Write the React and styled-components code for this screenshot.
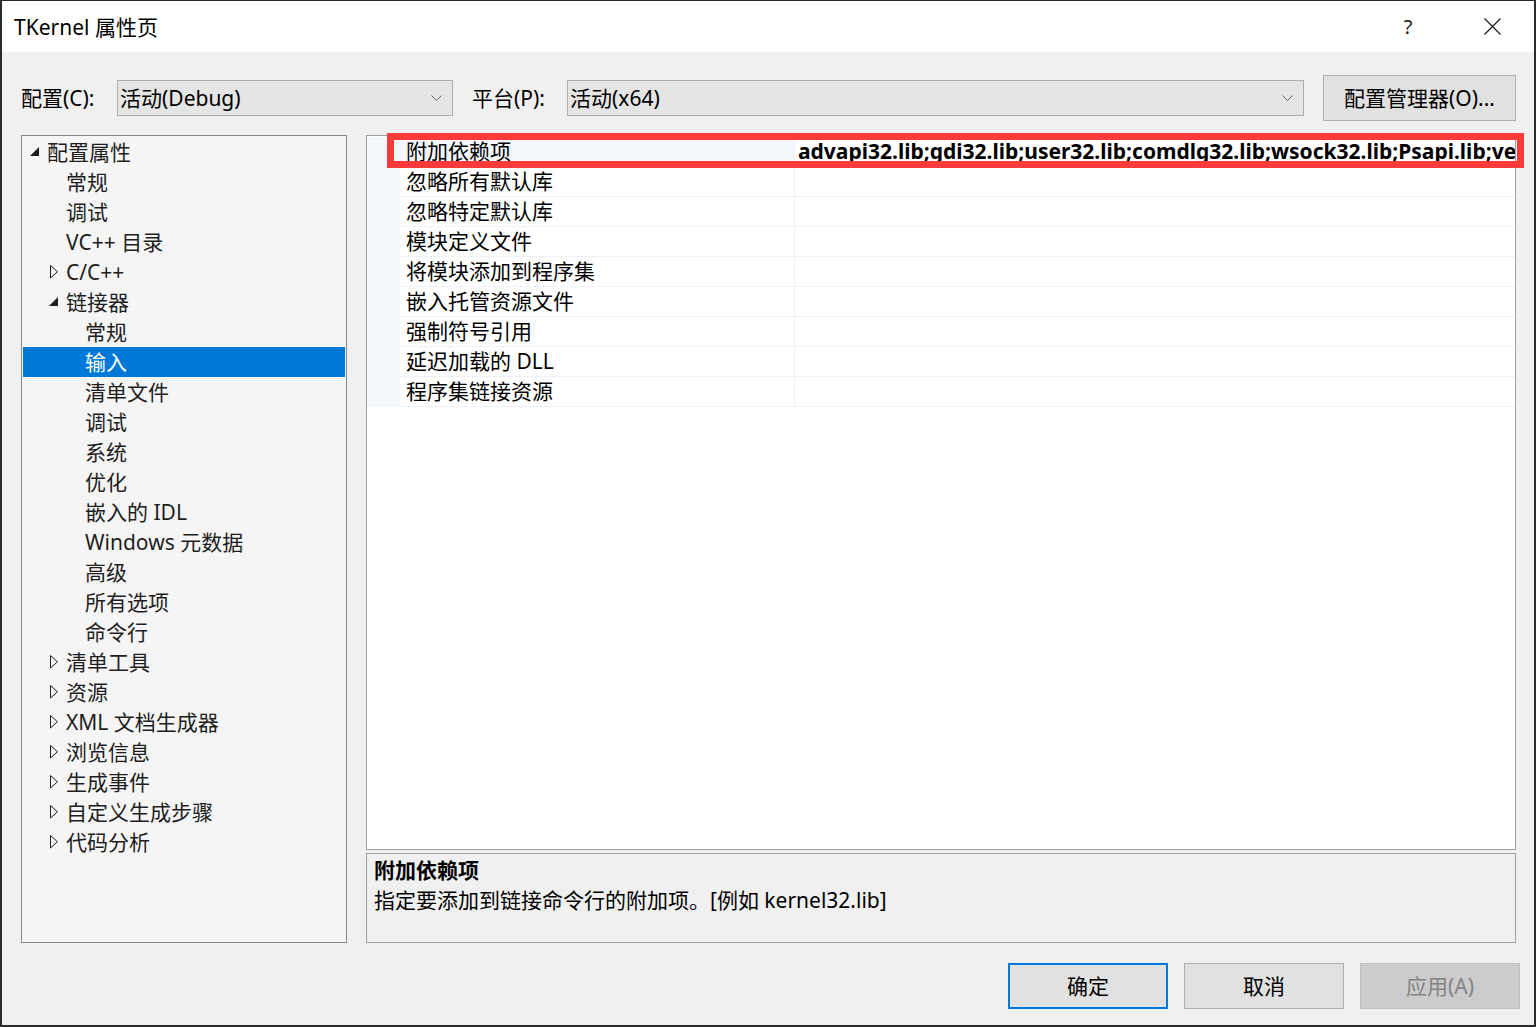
import React from "react";
import styled, { createGlobalStyle } from "styled-components";

const Global = createGlobalStyle`
  html, body { margin: 0; padding: 0; background: #2b2b2b; }
  body { font-family: "Noto Sans", "Noto Sans CJK SC", sans-serif; font-size: 21px; color: #000; }
  * { box-sizing: border-box; }
`;

const Window = styled.div`
  width: 1536px;
  height: 1027px;
  border: 2px solid #2b2b2b;
  border-top-width: 1px;
  background: #f0f0f0;
  display: flex;
  flex-direction: column;
  overflow: hidden;
`;

const TitleBar = styled.div`
  height: 51px;
  flex: none;
  background: #fff;
  display: flex;
  align-items: center;
  padding-left: 12px;
`;

const Title = styled.div`
  flex: 1;
  line-height: 28px;
`;

const TitleButton = styled.div`
  width: 84px;
  height: 51px;
  display: flex;
  align-items: center;
  justify-content: center;
  color: #1a1a1a;
  font-size: 20px;
`;

const Body = styled.div`
  flex: 1;
  display: flex;
  flex-direction: column;
  padding: 0 18px 16px 19px;
`;

const ConfigRow = styled.div`
  margin-top: 23px;
  height: 46px;
  display: flex;
  align-items: center;
`;

const Label = styled.div`
  width: ${(p) => p.$w}px;
  margin-left: ${(p) => p.$ml || 0}px;
  line-height: 30px;
  flex: none;
  white-space: nowrap;
`;

const Select = styled.div`
  height: 36px;
  width: ${(p) => (p.$w ? `${p.$w}px` : "auto")};
  flex: ${(p) => (p.$w ? "none" : "1")};
  background: #e5e5e5;
  border: 1px solid #adadad;
  display: flex;
  align-items: center;
  padding-left: 2px;
  padding-right: 10px;
`;

const SelectText = styled.div`
  flex: 1;
  line-height: 30px;
`;

const Button = styled.div`
  width: ${(p) => p.$w}px;
  height: 46px;
  flex: none;
  margin-left: ${(p) => p.$ml || 0}px;
  display: flex;
  align-items: center;
  justify-content: center;
  background: ${(p) => (p.$disabled ? "#cccccc" : "#e1e1e1")};
  border: ${(p) => (p.$default ? "2px solid #0078d7" : p.$disabled ? "1px solid #bfbfbf" : "1px solid #adadad")};
  color: ${(p) => (p.$disabled ? "#838383" : "#000")};
  line-height: 30px;
  white-space: nowrap;
`;

const Main = styled.div`
  margin-top: 14px;
  height: 808px;
  display: flex;
`;

const TreePanel = styled.div`
  width: 326px;
  flex: none;
  border: 1px solid #828790;
  background: #f5f5f5;
  padding: 1px;
`;

const TreeRow = styled.div`
  height: 30px;
  display: flex;
  align-items: center;
  padding-left: ${(p) => 5 + p.$level * 19}px;
  background: ${(p) => (p.$selected ? "#0078d7" : "transparent")};
  color: ${(p) => (p.$selected ? "#fff" : "#1e1e1e")};
  white-space: nowrap;
`;

const Toggle = styled.div`
  width: 19px;
  height: 30px;
  flex: none;
  display: flex;
  align-items: center;
  padding-left: ${(p) => (p.$open ? 2 : 3)}px;
  padding-bottom: ${(p) => (p.$open ? 1 : 0)}px;
`;

const TreeText = styled.span`
  line-height: 30px;
`;

const RightCol = styled.div`
  flex: 1;
  margin-left: 19px;
  display: flex;
  flex-direction: column;
`;

const Grid = styled.div`
  position: relative;
  height: 715px;
  border: 1px solid #a0a0a0;
  background: #fff;
  padding-top: 1px;
`;

const GridRow = styled.div`
  height: 30px;
  display: grid;
  grid-template-columns: 33px 395px 1fr;
`;

const Strip = styled.div`
  background: #f3f6fb;
`;

const NameCell = styled.div`
  padding-left: 6px;
  line-height: 29px;
  border-bottom: 1px solid #eff1f6;
  border-right: 1px solid #eff1f6;
  background: ${(p) => (p.$active ? "#f3f6fb" : "#fff")};
  white-space: nowrap;
`;

const ValueCell = styled.div`
  padding-left: 3px;
  line-height: 29px;
  border-bottom: 1px solid #eff1f6;
  font-weight: 700;
  white-space: nowrap;
  overflow: hidden;
`;

const Highlight = styled.div`
  position: absolute;
  left: 20px;
  top: -3px;
  width: 1137px;
  height: 35px;
  border: 7px solid #fb3a3a;
  pointer-events: none;
`;

const Desc = styled.div`
  margin-top: 3px;
  height: 90px;
  border: 1px solid #a0a0a0;
  background: #f0f0f0;
  padding: 1px 7px;
`;

const DescTitle = styled.div`
  font-weight: 700;
  line-height: 30px;
`;

const DescText = styled.div`
  line-height: 30px;
`;

const Footer = styled.div`
  margin-top: 20px;
  margin-right: -4px;
  display: flex;
  justify-content: flex-end;
  gap: 16px;
`;

const Chevron = () => (
  <svg width="11" height="6" viewBox="0 0 11 6">
    <polyline points="0.5,0.5 5.5,5.5 10.5,0.5" fill="none" stroke="#606060" strokeWidth="1" />
  </svg>
);

const OpenTri = () => (
  <svg width="10" height="10" viewBox="0 0 10 10">
    <polygon points="9,0 9,9 0,9" fill="#1e1e1e" />
  </svg>
);

const ClosedTri = () => (
  <svg width="9" height="14" viewBox="0 0 9 14">
    <polygon points="0.5,0.5 7.5,6.75 0.5,13" fill="none" stroke="#1e1e1e" strokeWidth="1" />
  </svg>
);

const CloseIcon = () => (
  <svg width="17" height="17" viewBox="0 0 17 17">
    <path d="M0.5 0.5 L16.5 16.5 M16.5 0.5 L0.5 16.5" stroke="#1a1a1a" strokeWidth="1.2" fill="none" />
  </svg>
);

const tree = [
  { t: "配置属性", l: 0, s: "open" },
  { t: "常规", l: 1 },
  { t: "调试", l: 1 },
  { t: "VC++ 目录", l: 1 },
  { t: "C/C++", l: 1, s: "closed" },
  { t: "链接器", l: 1, s: "open" },
  { t: "常规", l: 2 },
  { t: "输入", l: 2, sel: true },
  { t: "清单文件", l: 2 },
  { t: "调试", l: 2 },
  { t: "系统", l: 2 },
  { t: "优化", l: 2 },
  { t: "嵌入的 IDL", l: 2 },
  { t: "Windows 元数据", l: 2 },
  { t: "高级", l: 2 },
  { t: "所有选项", l: 2 },
  { t: "命令行", l: 2 },
  { t: "清单工具", l: 1, s: "closed" },
  { t: "资源", l: 1, s: "closed" },
  { t: "XML 文档生成器", l: 1, s: "closed" },
  { t: "浏览信息", l: 1, s: "closed" },
  { t: "生成事件", l: 1, s: "closed" },
  { t: "自定义生成步骤", l: 1, s: "closed" },
  { t: "代码分析", l: 1, s: "closed" },
];

const props = [
  { n: "附加依赖项", v: "advapi32.lib;gdi32.lib;user32.lib;comdlg32.lib;wsock32.lib;Psapi.lib;version.lib;%(AdditionalDependencies)" },
  { n: "忽略所有默认库" },
  { n: "忽略特定默认库" },
  { n: "模块定义文件" },
  { n: "将模块添加到程序集" },
  { n: "嵌入托管资源文件" },
  { n: "强制符号引用" },
  { n: "延迟加载的 DLL" },
  { n: "程序集链接资源" },
];

export default function App() {
  return (
    <>
      <Global />
      <Window>
        <TitleBar>
          <Title>TKernel 属性页</Title>
          <TitleButton>?</TitleButton>
          <TitleButton>
            <CloseIcon />
          </TitleButton>
        </TitleBar>
        <Body>
          <ConfigRow>
            <Label $w={96}>配置(C):</Label>
            <Select $w={336}>
              <SelectText>活动(Debug)</SelectText>
              <Chevron />
            </Select>
            <Label $w={95} $ml={19}>平台(P):</Label>
            <Select>
              <SelectText>活动(x64)</SelectText>
              <Chevron />
            </Select>
            <Button $w={193} $ml={19}>配置管理器(O)...</Button>
          </ConfigRow>
          <Main>
            <TreePanel>
              {tree.map((it, i) => (
                <TreeRow key={i} $level={it.l} $selected={it.sel}>
                  <Toggle $open={it.s === "open"}>
                    {it.s === "open" ? <OpenTri /> : it.s === "closed" ? <ClosedTri /> : null}
                  </Toggle>
                  <TreeText>{it.t}</TreeText>
                </TreeRow>
              ))}
            </TreePanel>
            <RightCol>
              <Grid>
                {props.map((p, i) => (
                  <GridRow key={i}>
                    <Strip />
                    <NameCell $active={i === 0}>{p.n}</NameCell>
                    <ValueCell>{p.v || ""}</ValueCell>
                  </GridRow>
                ))}
                <Highlight />
              </Grid>
              <Desc>
                <DescTitle>附加依赖项</DescTitle>
                <DescText>指定要添加到链接命令行的附加项。[例如 kernel32.lib]</DescText>
              </Desc>
            </RightCol>
          </Main>
          <Footer>
            <Button $w={160} $default>确定</Button>
            <Button $w={160}>取消</Button>
            <Button $w={160} $disabled>应用(A)</Button>
          </Footer>
        </Body>
      </Window>
    </>
  );
}
